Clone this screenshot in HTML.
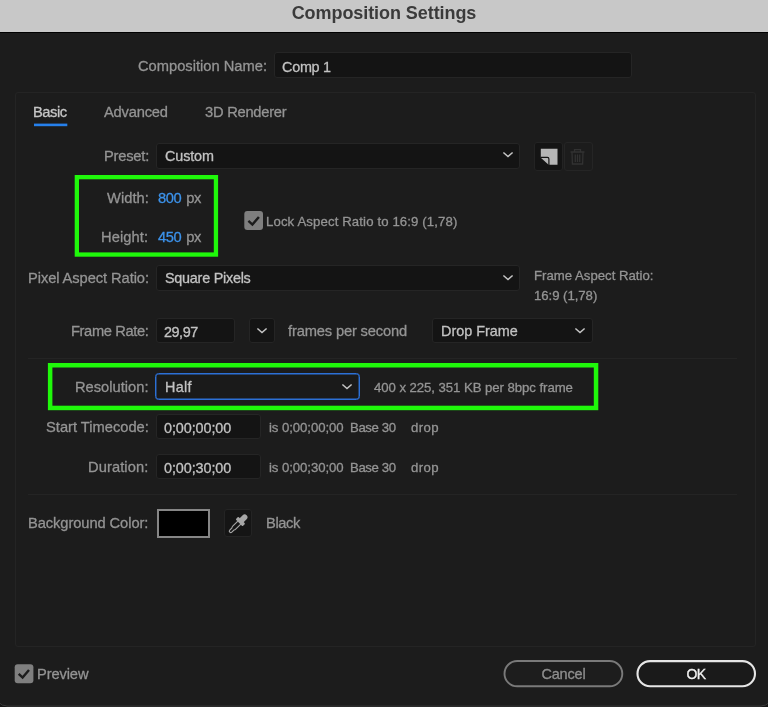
<!DOCTYPE html>
<html lang="en">
<head>
<meta charset="utf-8">
<title>Composition Settings</title>
<style>
html,body{margin:0;padding:0;}
body{width:768px;height:707px;overflow:hidden;background:#1c1c1c;position:relative;
 font-family:"Liberation Sans",sans-serif;font-size:14.7px;color:#9c9c9c;}
.abs{position:absolute;}
#titlebar{left:0;top:0;width:768px;height:32px;background:#c8c8c8;border-bottom:1px solid #000;}
#title{left:0;top:0;width:768px;height:28px;line-height:26px;text-align:center;font-weight:bold;font-size:18px;color:#3b3b3b;letter-spacing:0.02px;}
#bottomstrip{left:0;top:705px;width:768px;height:2px;background:linear-gradient(#232323,#2e2e2e);}
.t,.v,.btn,#title{will-change:transform;}
.t,.v,.btn{-webkit-text-stroke:0.3px currentColor;}
.t{position:absolute;white-space:nowrap;height:20px;line-height:20px;font-size:14.7px;color:#949494;}
.s{font-size:13.2px;}
.r{text-align:right;right:619.5px;}
.w{color:#d4d4d4;}
.field{position:absolute;box-sizing:border-box;background:#141414;border:1px solid #252525;border-radius:3px;height:26px;}
.field .v{position:absolute;left:8px;top:2px;height:20px;line-height:20px;font-size:14.4px;color:#c2c2c2;white-space:nowrap;}
.chev{position:absolute;width:12px;height:8px;}
#panel{left:15px;top:92px;width:741px;height:555px;box-sizing:border-box;border:1px solid #242424;border-radius:3px;}
.sep{position:absolute;left:28px;width:709px;height:1px;background:#242424;}
.green{position:absolute;box-sizing:border-box;border:4px solid #1ff80a;}
.cb{position:absolute;width:18px;height:18px;background:#8a8a8a;border-radius:3px;}
.btn{position:absolute;box-sizing:border-box;height:27px;width:120px;border-radius:14px;text-align:center;line-height:23px;font-size:15px;}
</style>
</head>
<body>
<div id="titlebar" class="abs"></div>
<div id="title" style="letter-spacing:-0.07px;" class="abs">Composition Settings</div>
<div id="bottomstrip" class="abs"></div>
<svg class="abs" style="left:0;top:697px;" width="768" height="10" viewBox="0 697 768 10"><path d="M0 707 V702.6 Q1.2 706 6.5 706 V707 Z" fill="#161616"/><path d="M-0.5 702.8 Q1.5 705.8 6.5 705.9" fill="none" stroke="#3a3a3a" stroke-width="0.9"/><path d="M768 707 V702.6 Q766.8 706 761.5 706 V707 Z" fill="#161616"/><path d="M768.5 702.8 Q766.5 705.8 761.5 705.9" fill="none" stroke="#3a3a3a" stroke-width="0.9"/></svg>

<!-- Composition name -->
<div class="t" id="l_comp" style="right:501px;text-align:right;top:56px;">Composition Name:</div>
<div class="field" style="left:274px;top:52px;width:358px;"><span class="v" id="v_comp" style="letter-spacing:-0.26px;top:4px;left:7px;">Comp 1</span></div>

<div id="panel" class="abs"></div>

<!-- tabs -->
<div class="t w" id="tab1" style="letter-spacing:-0.45px;left:33px;top:102px;color:#c6c6c6;">Basic</div>
<svg class="abs" style="left:30px;top:120px;" width="44" height="10" viewBox="30 120 44 10"><rect x="34" y="123.6" width="33.3" height="2.6" fill="#2680eb"/></svg>
<div class="t" id="tab2" style="letter-spacing:-0.19px;left:104px;top:102px;">Advanced</div>
<div class="t" id="tab3" style="letter-spacing:-0.24px;left:205px;top:102px;">3D Renderer</div>

<!-- preset -->
<div class="t r" id="l_preset" style="letter-spacing:-0.22px;top:146px;">Preset:</div>
<div class="field" style="left:156px;top:143px;width:364px;"><span class="v" id="v_preset" style="letter-spacing:-0.12px;">Custom</span>
<svg class="chev" style="left:345.3px;top:7.3px;" viewBox="0 0 12 8"><path d="M1.4 1.5 L6 5.5 L10.6 1.5" fill="none" stroke="#c6c6c6" stroke-width="1.5"/></svg></div>
<div class="abs" style="left:534px;top:142px;width:29px;height:29px;background:#141414;border-radius:3px;box-sizing:border-box;border:1px solid #232323;">
<svg width="27" height="27" viewBox="535 143 27 27"><path d="M540.8 148.8 H557.5 V164.7 H548.6 L540.8 157.7 Z" fill="#b6b6b6"/><path d="M540.6 157.4 H547.4 Q548.9 157.4 548.9 159 V165" fill="none" stroke="#141414" stroke-width="1.2"/></svg></div>
<div class="abs" style="left:564px;top:142px;width:29px;height:29px;box-sizing:border-box;border:1px solid #252525;border-radius:3px;">
<svg width="27" height="27" viewBox="565 143 27 27"><g fill="none" stroke="#323232" stroke-width="1.3"><path d="M570.5 152 H584.5 M574.5 151.5 V149.6 H580.5 V151.5 M572 152.5 L572.4 164 H582.6 L583 152.5 M575.3 154.5 V162 M577.5 154.5 V162 M579.7 154.5 V162"/></g></svg></div>

<!-- width / height -->
<svg class="abs" style="left:70px;top:170px;" width="154" height="92" viewBox="70 170 154 92"><rect x="76.85" y="177.15" width="139.1" height="77.4" fill="none" stroke="#1ff80a" stroke-width="4.3"/></svg>
<div class="t r" id="l_width" style="letter-spacing:0.05px;top:188px;">Width:</div>
<div class="t" id="v_width" style="letter-spacing:-0.36px;left:158px;top:188px;"><span style="color:#3c92ea">800</span> <span style="margin-left:1px">px</span></div>
<div class="t r" id="l_height" style="letter-spacing:0.08px;top:227px;">Height:</div>
<div class="t" id="v_height" style="letter-spacing:-0.36px;left:158px;top:227px;"><span style="color:#3c92ea">450</span> <span style="margin-left:1px">px</span></div>

<svg class="abs" style="left:244px;top:211px;" width="20" height="20" viewBox="0 0 20 20"><rect x="0.3" y="0.1" width="18.7" height="19" rx="3" fill="#7f7f7f"/><path d="M4.4 9.8 L8.4 13.6 L14.9 5.9" fill="none" stroke="#1c1c1c" stroke-width="2.4"/></svg>
<div class="t s" id="lock" style="letter-spacing:0.12px;left:266px;top:212px;">Lock Aspect Ratio to 16:9 (1,78)</div>

<!-- pixel aspect ratio -->
<div class="t r" id="l_par" style="letter-spacing:-0.08px;top:268px;">Pixel Aspect Ratio:</div>
<div class="field" style="left:156px;top:265px;width:364px;"><span class="v" id="v_par" style="letter-spacing:-0.25px;">Square Pixels</span>
<svg class="chev" style="left:345.3px;top:8px;" viewBox="0 0 12 8"><path d="M1.4 1.5 L6 5.5 L10.6 1.5" fill="none" stroke="#c6c6c6" stroke-width="1.5"/></svg></div>
<div class="t s" id="far1" style="left:534px;top:266px;">Frame Aspect Ratio:</div>
<div class="t s" id="far2" style="letter-spacing:-0.05px;left:533.5px;top:286px;">16:9 (1,78)</div>

<!-- frame rate -->
<div class="t r" id="l_fr" style="letter-spacing:-0.375px;top:321px;">Frame Rate:</div>
<div class="field" style="left:156px;top:318px;width:79px;height:25px;"><span class="v" id="v_fr" style="letter-spacing:-0.45px;top:3px;left:7px;">29,97</span></div>
<div class="field" style="left:249px;top:318px;width:26px;height:25px;">
<svg class="chev" style="left:6.3px;top:7.8px;" viewBox="0 0 12 8"><path d="M1.4 1.5 L6 5.5 L10.6 1.5" fill="none" stroke="#c6c6c6" stroke-width="1.5"/></svg></div>
<div class="t" id="fps" style="letter-spacing:-0.156px;left:288px;top:321px;">frames per second</div>
<div class="field" style="left:432px;top:318px;width:161px;height:25px;"><span class="v" id="v_drop" style="letter-spacing:0px;left:8px;">Drop Frame</span>
<svg class="chev" style="left:141px;top:7.6px;" viewBox="0 0 12 8"><path d="M1.4 1.5 L6 5.5 L10.6 1.5" fill="none" stroke="#c6c6c6" stroke-width="1.5"/></svg></div>

<div class="sep" style="top:358px;"></div>

<!-- resolution -->
<svg class="abs" style="left:44px;top:358px;" width="560" height="58" viewBox="44 358 560 58"><rect x="50.15" y="365.25" width="545.9" height="42.7" fill="none" stroke="#1ff80a" stroke-width="4.5"/></svg>
<div class="t r" id="l_res" style="top:377px;">Resolution:</div>
<div class="field" style="left:155px;top:373px;width:205px;height:27px;border:1px solid #2c70d6;box-shadow:inset 0 0 0 0.45px #2c70d6;background:#1a1a1a;border-radius:3.5px;"><span class="v" id="v_res" style="letter-spacing:0.33px;left:9px;top:3px;">Half</span>
<svg class="chev" style="left:185.3px;top:8.8px;" viewBox="0 0 12 8"><path d="M1.4 1.5 L6 5.5 L10.6 1.5" fill="none" stroke="#c6c6c6" stroke-width="1.5"/></svg></div>
<div class="t s" id="resinfo" style="letter-spacing:-0.063px;left:374px;top:378px;">400 x 225, 351 KB per 8bpc frame</div>

<!-- start timecode -->
<div class="t r" id="l_stc" style="top:417px;">Start Timecode:</div>
<div class="field" style="left:156px;top:414px;width:105px;height:25px;"><span class="v" id="v_stc" style="letter-spacing:-0.083px;left:7px;top:3px;">0;00;00;00</span></div>
<div class="t s" id="stc1" style="letter-spacing:-0.08px;left:269px;top:418px;">is 0;00;00;00</div>
<div class="t s" id="stc2" style="letter-spacing:-0.4px;left:350px;top:418px;">Base 30</div>
<div class="t s" id="stc3" style="letter-spacing:0.38px;left:411px;top:418px;">drop</div>

<div class="t r" id="l_dur" style="letter-spacing:0.09px;top:457px;">Duration:</div>
<div class="field" style="left:156px;top:454px;width:105px;height:25px;"><span class="v" id="v_dur" style="letter-spacing:-0.083px;left:7px;top:3px;">0;00;30;00</span></div>
<div class="t s" id="dur1" style="letter-spacing:-0.08px;left:269px;top:458px;">is 0;00;30;00</div>
<div class="t s" id="dur2" style="letter-spacing:-0.4px;left:350px;top:458px;">Base 30</div>
<div class="t s" id="dur3" style="letter-spacing:0.38px;left:411px;top:458px;">drop</div>

<div class="sep" style="top:494px;"></div>

<!-- background color -->
<div class="t r" id="l_bg" style="letter-spacing:-0.08px;top:513px;">Background Color:</div>
<div class="abs" style="left:157px;top:509px;width:53px;height:29px;box-sizing:border-box;border:2px solid #868686;background:#000;"></div>
<div class="abs" style="left:224px;top:509px;width:28px;height:28px;background:#151515;border-radius:3px;box-sizing:border-box;border:1px solid #242424;">
<svg width="26" height="26" viewBox="1 0.5 26 26"><g transform="translate(16.4 12) rotate(-45)"><rect x="-1.9" y="-4.9" width="3.8" height="9.8" rx="0.9" fill="#a6a6a6"/><path d="M0 -2.8 H6 A2.8 2.8 0 0 1 6 2.8 H0 Z" fill="#a6a6a6"/><path d="M-1.5 -2.1 L-8.4 -2.1 Q-9.8 -2.1 -10.6 -1.45 L-13.6 -1.45 A1.45 1.45 0 0 0 -13.6 1.45 L-10.6 1.45 Q-9.8 2.1 -8.4 2.1 L-1.5 2.1" fill="none" stroke="#a6a6a6" stroke-width="1.15"/></g></svg></div>
<div class="t" id="black" style="letter-spacing:-0.375px;left:266px;top:513px;">Black</div>

<!-- preview -->
<svg class="abs" style="left:14px;top:664px;" width="20" height="20" viewBox="0 0 20 20"><rect x="0.7" y="0.2" width="18.7" height="19" rx="3" fill="#7f7f7f"/><path d="M4.7 9.85 L8.6 13.6 L15 5.9" fill="none" stroke="#1c1c1c" stroke-width="2.4"/></svg>
<div class="t" id="preview" style="letter-spacing:-0.125px;left:37px;top:664px;">Preview</div>

<svg class="abs" style="left:500px;top:656px;" width="262" height="36" viewBox="500 656 262 36"><rect x="504.5" y="661" width="117.8" height="25.3" rx="12.65" fill="#1d1d1d" stroke="#7a7a7a" stroke-width="1.9"/><rect x="637.5" y="661.1" width="117.5" height="25.1" rx="12.55" fill="#1a1a1a" stroke="#e6e6e6" stroke-width="2.1"/></svg>
<div class="btn" id="cancel" style="letter-spacing:-0.15px;font-size:14.5px;line-height:25px;text-indent:-1px;left:504px;top:660px;border:2px solid transparent;color:#8f8f8f;">Cancel</div>
<div class="btn" id="ok" style="letter-spacing:-0.5px;font-size:14px;line-height:25px;text-indent:-2px;left:637px;top:660px;border:2px solid transparent;color:#f0f0f0;">OK</div>
</body>
</html>
